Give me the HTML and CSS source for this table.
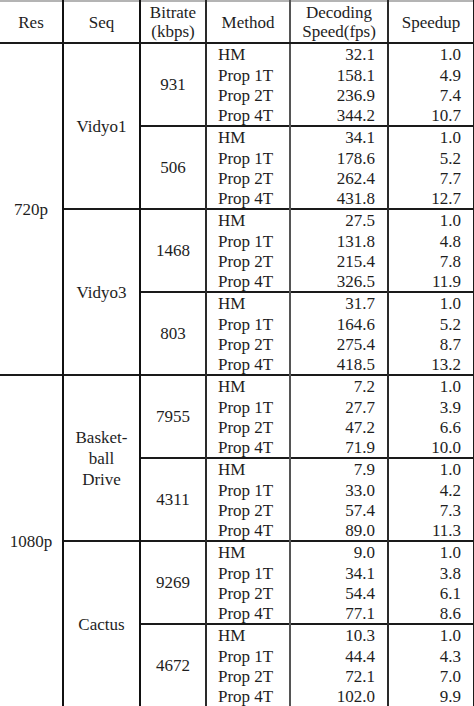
FILE: index.html
```html
<!DOCTYPE html>
<html>
<head>
<meta charset="utf-8">
<link rel="stylesheet" href="styles.css">
</head>
<body>
<table class="results">
  <colgroup>
    <col class="c-res"><col class="c-seq"><col class="c-bit"><col class="c-meth"><col class="c-dec"><col class="c-spd">
  </colgroup>
  <thead>
    <tr>
      <th class="res">Res</th>
      <th class="seq">Seq</th>
      <th class="bit">Bitrate<br>(kbps)</th>
      <th class="meth-h">Method</th>
      <th class="dec">Decoding<br>Speed(fps)</th>
      <th class="spd">Speedup</th>
    </tr>
  </thead>
  <tbody>
    <tr class="g"><td class="res" rowspan="16">720p</td><td class="seq" rowspan="8">Vidyo1</td><td class="bit" rowspan="4">931</td><td class="meth">HM</td><td class="dec">32.1</td><td class="spd">1.0</td></tr>
    <tr><td class="meth">Prop 1T</td><td class="dec">158.1</td><td class="spd">4.9</td></tr>
    <tr><td class="meth">Prop 2T</td><td class="dec">236.9</td><td class="spd">7.4</td></tr>
    <tr><td class="meth">Prop 4T</td><td class="dec">344.2</td><td class="spd">10.7</td></tr>
    <tr class="g"><td class="bit" rowspan="4">506</td><td class="meth">HM</td><td class="dec">34.1</td><td class="spd">1.0</td></tr>
    <tr><td class="meth">Prop 1T</td><td class="dec">178.6</td><td class="spd">5.2</td></tr>
    <tr><td class="meth">Prop 2T</td><td class="dec">262.4</td><td class="spd">7.7</td></tr>
    <tr><td class="meth">Prop 4T</td><td class="dec">431.8</td><td class="spd">12.7</td></tr>
    <tr class="g"><td class="seq" rowspan="8">Vidyo3</td><td class="bit" rowspan="4">1468</td><td class="meth">HM</td><td class="dec">27.5</td><td class="spd">1.0</td></tr>
    <tr><td class="meth">Prop 1T</td><td class="dec">131.8</td><td class="spd">4.8</td></tr>
    <tr><td class="meth">Prop 2T</td><td class="dec">215.4</td><td class="spd">7.8</td></tr>
    <tr><td class="meth">Prop 4T</td><td class="dec">326.5</td><td class="spd">11.9</td></tr>
    <tr class="g"><td class="bit" rowspan="4">803</td><td class="meth">HM</td><td class="dec">31.7</td><td class="spd">1.0</td></tr>
    <tr><td class="meth">Prop 1T</td><td class="dec">164.6</td><td class="spd">5.2</td></tr>
    <tr><td class="meth">Prop 2T</td><td class="dec">275.4</td><td class="spd">8.7</td></tr>
    <tr><td class="meth">Prop 4T</td><td class="dec">418.5</td><td class="spd">13.2</td></tr>
    <tr class="g"><td class="res" rowspan="16">1080p</td><td class="seq" rowspan="8">Basket-<br>ball<br>Drive</td><td class="bit" rowspan="4">7955</td><td class="meth">HM</td><td class="dec">7.2</td><td class="spd">1.0</td></tr>
    <tr><td class="meth">Prop 1T</td><td class="dec">27.7</td><td class="spd">3.9</td></tr>
    <tr><td class="meth">Prop 2T</td><td class="dec">47.2</td><td class="spd">6.6</td></tr>
    <tr><td class="meth">Prop 4T</td><td class="dec">71.9</td><td class="spd">10.0</td></tr>
    <tr class="g"><td class="bit" rowspan="4">4311</td><td class="meth">HM</td><td class="dec">7.9</td><td class="spd">1.0</td></tr>
    <tr><td class="meth">Prop 1T</td><td class="dec">33.0</td><td class="spd">4.2</td></tr>
    <tr><td class="meth">Prop 2T</td><td class="dec">57.4</td><td class="spd">7.3</td></tr>
    <tr><td class="meth">Prop 4T</td><td class="dec">89.0</td><td class="spd">11.3</td></tr>
    <tr class="g"><td class="seq" rowspan="8">Cactus</td><td class="bit" rowspan="4">9269</td><td class="meth">HM</td><td class="dec">9.0</td><td class="spd">1.0</td></tr>
    <tr><td class="meth">Prop 1T</td><td class="dec">34.1</td><td class="spd">3.8</td></tr>
    <tr><td class="meth">Prop 2T</td><td class="dec">54.4</td><td class="spd">6.1</td></tr>
    <tr><td class="meth">Prop 4T</td><td class="dec">77.1</td><td class="spd">8.6</td></tr>
    <tr class="g"><td class="bit" rowspan="4">4672</td><td class="meth">HM</td><td class="dec">10.3</td><td class="spd">1.0</td></tr>
    <tr><td class="meth">Prop 1T</td><td class="dec">44.4</td><td class="spd">4.3</td></tr>
    <tr><td class="meth">Prop 2T</td><td class="dec">72.1</td><td class="spd">7.0</td></tr>
    <tr><td class="meth">Prop 4T</td><td class="dec">102.0</td><td class="spd">9.9</td></tr>
  </tbody>
</table>
</body>
</html>
```
FILE: styles.css
```css
html, body {
  margin: 0;
  padding: 0;
  background: #ffffff;
  font-family: "Liberation Serif", "Times New Roman", Times, "DejaVu Serif", serif;
}

.results {
  border-collapse: collapse;
  table-layout: fixed;
  width: 474px;
  font-family: "Liberation Serif", "Times New Roman", Times, "DejaVu Serif", serif;
  font-size: 17px;
  color: #1e1e1e;
  border-top: 2px solid #b4b4b4;
}

.results th,
.results td {
  font-family: "Liberation Serif", "Times New Roman", Times, "DejaVu Serif", serif;
}

.c-res { width: 63px; }
.c-seq { width: 77px; }
.c-bit { width: 66px; }
.c-meth { width: 84px; }
.c-dec { width: 98px; }
.c-spd { width: 86px; }

.results th {
  font-weight: normal;
  height: 40px;
  line-height: 19px;
  padding: 0;
  text-align: center;
  border-bottom: 2px solid #1a1a1a;
}

.results td {
  height: 20px;
  line-height: 19px;
  padding: 0;
  white-space: nowrap;
}

.results tr.g td {
  height: 21px;
  border-top: 2px solid #1a1a1a;
}

.res { border-right: 2px solid #111; text-align: center; }
.seq { border-right: 2px solid #111; text-align: center; }
.bit { border-right: 2px solid #2a2a2a; text-align: center; }
.meth, .meth-h { border-right: 2px solid #555; }
.meth { text-align: left; padding-left: 11px !important; }
.dec { border-right: 2px solid #2a2a2a; text-align: right; }
td.dec { padding-right: 12px !important; }
.spd { border-right: 2px solid #1a1a1a; text-align: right; }
td.spd { padding-right: 12px !important; }
th.dec, th.spd { text-align: center; }

.results td.res, .results td.seq, .results td.bit {
  vertical-align: middle;
  line-height: 21px;
}
```
